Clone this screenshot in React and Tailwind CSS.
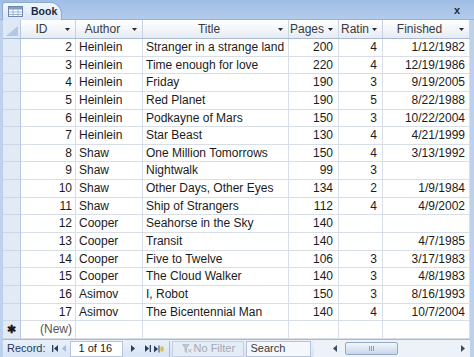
import React from "react";

const rows = [
  ["2", "Heinlein", "Stranger in a strange land", "200", "4", "1/12/1982"],
  ["3", "Heinlein", "Time enough for love", "220", "4", "12/19/1986"],
  ["4", "Heinlein", "Friday", "190", "3", "9/19/2005"],
  ["5", "Heinlein", "Red Planet", "190", "5", "8/22/1988"],
  ["6", "Heinlein", "Podkayne of Mars", "150", "3", "10/22/2004"],
  ["7", "Heinlein", "Star Beast", "130", "4", "4/21/1999"],
  ["8", "Shaw", "One Million Tomorrows", "150", "4", "3/13/1992"],
  ["9", "Shaw", "Nightwalk", "99", "3", ""],
  ["10", "Shaw", "Other Days, Other Eyes", "134", "2", "1/9/1984"],
  ["11", "Shaw", "Ship of Strangers", "112", "4", "4/9/2002"],
  ["12", "Cooper", "Seahorse in the Sky", "140", "", ""],
  ["13", "Cooper", "Transit", "140", "", "4/7/1985"],
  ["14", "Cooper", "Five to Twelve", "106", "3", "3/17/1983"],
  ["15", "Cooper", "The Cloud Walker", "140", "3", "4/8/1983"],
  ["16", "Asimov", "I, Robot", "150", "3", "8/16/1993"],
  ["17", "Asimov", "The Bicentennial Man", "140", "4", "10/7/2004"],
];

const cell = "shrink-0 border-r border-b border-[#d7dee8] leading-[16.65px] whitespace-nowrap overflow-hidden";

function Arrow() {
  return (
    <svg width="5" height="3" viewBox="0 0 5 3" className="shrink-0 ml-[3px]">
      <path d="M0 0H5L2.5 3Z" fill="#2a2a2a" />
    </svg>
  );
}

function HeaderCell({ w, label, left }) {
  return (
    <div className={`${w} shrink-0 h-full flex items-center border-r border-[#c9d4e2] pr-[5px]`}>
      {left ? (
        <div className="flex-1 whitespace-nowrap pl-[2px]">{label}</div>
      ) : (
        <div className="flex-1 text-center whitespace-nowrap">{label}</div>
      )}
      <Arrow />
    </div>
  );
}

function Sel({ children }) {
  return (
    <div className="w-[18px] shrink-0 bg-[#e2eaf6] border-r border-b border-r-[#b6c7dd] border-b-[#cbd7e8] flex items-center justify-center text-[#1a1a1a]">
      {children}
    </div>
  );
}

export default function App() {
  return (
    <div
      className="w-[474px] h-[357px] overflow-hidden flex flex-col bg-[#bdd3ee] text-[12px] text-[#1b1b1b]"
      style={{ fontFamily: '"Liberation Sans", Arial, sans-serif' }}
    >
      {/* Tab strip */}
      <div className="h-[20px] shrink-0 flex items-end bg-gradient-to-b from-[#9fbde5] to-[#b3cced] border-b border-[#94b0d6]">
        <div className="ml-[2px] h-[18px] w-[60px] flex items-center rounded-tl-[3px] rounded-tr-[12px] bg-gradient-to-b from-[#f3f7fc] to-[#d9e6f6] border border-b-0 border-[#8eabd2] -mb-px">
          <svg width="15" height="11" viewBox="0 0 15 11" className="ml-[5px]">
            <rect x="0.5" y="0.5" width="14" height="10" fill="#ffffff" stroke="#6a87ad" />
            <rect x="1" y="1" width="13" height="2.5" fill="#7e9fc9" />
            <path d="M5 1V10.5M10 1V10.5M1 6H14.5M1 8.5H14.5" stroke="#8aa3c4" strokeWidth="0.8" />
          </svg>
          <span className="ml-[8px] text-[10.5px] font-bold text-[#1b2b44]">Book</span>
        </div>
        <div className="flex-1" />
        <div className="mr-[14px] mb-[3px] text-[11px] font-bold text-[#2a2a2a] leading-none">x</div>
      </div>

      <div className="flex-1 flex min-h-0">
        <div className="w-[3px] shrink-0 bg-[#bcd1ec]" />
        <div className="flex-1 flex flex-col bg-white min-w-0">
          {/* Header */}
          <div className="h-[19px] shrink-0 flex bg-gradient-to-b from-[#ffffff] to-[#e6ecf4] border-b border-[#a9bbd2] text-[#3a3a3a]">
            <div className="w-[18px] shrink-0 h-full bg-[#dfe8f5] border-r border-[#b6c7dd] flex items-end justify-end pb-[2px] pr-[2px]">
              <svg width="12" height="10" viewBox="0 0 12 10">
                <path d="M12 0V10H0Z" fill="#b3c8e6" />
              </svg>
            </div>
            <HeaderCell w="w-[55px]" label="ID" />
            <HeaderCell w="w-[67px]" label="Author" />
            <HeaderCell w="w-[146px]" label="Title" />
            <HeaderCell w="w-[50px]" label="Pages" />
            <HeaderCell w="w-[44px]" label="Ratin" left />
            <HeaderCell w="w-[87px]" label="Finished" />
          </div>

          {rows.map((r) => (
            <div key={r[0]} className="h-[17.65px] shrink-0 flex">
              <Sel />
              <div className={`${cell} w-[55px] text-right pr-[3px]`}>{r[0]}</div>
              <div className={`${cell} w-[67px] pl-[3px]`}>{r[1]}</div>
              <div className={`${cell} w-[146px] pl-[3px]`}>{r[2]}</div>
              <div className={`${cell} w-[50px] text-right pr-[5px]`}>{r[3]}</div>
              <div className={`${cell} w-[44px] text-right pr-[5px]`}>{r[4]}</div>
              <div className={`${cell} w-[87px] text-right pr-[4px]`}>{r[5]}</div>
            </div>
          ))}

          <div className="h-[17.65px] shrink-0 flex">
            <Sel>
              <span className="text-[11px] leading-none font-bold">✱</span>
            </Sel>
            <div className={`${cell} w-[55px] text-right pr-[3px] text-[#555]`}>(New)</div>
            <div className={`${cell} w-[67px]`} />
            <div className={`${cell} w-[146px]`} />
            <div className={`${cell} w-[50px]`} />
            <div className={`${cell} w-[44px]`} />
            <div className={`${cell} w-[87px]`} />
          </div>

          <div className="flex-1" />

          {/* Record navigation bar */}
          <div className="h-[18px] shrink-0 flex items-center bg-gradient-to-b from-[#e9f0f9] to-[#d8e4f4] border-t border-[#a3b9d6] text-[11px]">
            <span className="ml-[4px] text-[#1f3b60]">Record:</span>
            <svg width="6" height="7" viewBox="0 0 6 7" className="ml-[6px]">
              <rect x="0" y="0" width="1.3" height="7" fill="#2b3f5c" />
              <path d="M6 0V7L2 3.5Z" fill="#2b3f5c" />
            </svg>
            <svg width="4" height="7" viewBox="0 0 4 7" className="ml-[4px]">
              <path d="M4 0V7L0 3.5Z" fill="#a9b9d0" />
            </svg>
            <div className="ml-[4px] h-[16px] w-[53px] bg-white border border-[#b3c5dd] flex items-center pl-[8px] text-[#1b1b1b]">
              1 of 16
            </div>
            <svg width="4" height="7" viewBox="0 0 4 7" className="ml-[8px]">
              <path d="M0 0V7L4 3.5Z" fill="#2b3f5c" />
            </svg>
            <svg width="6" height="7" viewBox="0 0 6 7" className="ml-[10px]">
              <path d="M0 0V7L4 3.5Z" fill="#2b3f5c" />
              <rect x="4.7" y="0" width="1.3" height="7" fill="#2b3f5c" />
            </svg>
            <svg width="10" height="8" viewBox="0 0 10 8" className="ml-[3px]">
              <path d="M0 0.5V7.5L4 4Z" fill="#2b3f5c" />
              <rect x="4.5" y="0.5" width="1" height="7" fill="#2b3f5c" />
              <path d="M8 1V7M5.5 4H10.5M6.3 1.8L9.7 6.2M9.7 1.8L6.3 6.2" stroke="#e0b43a" strokeWidth="1" />
            </svg>
            <div className="ml-[5px] h-[16px] w-px bg-[#a8bcd6]" />
            <div className="ml-[2px] h-[16px] w-[72px] border border-[#c3d1e3] bg-[#e4ecf6] flex items-center text-[#a3a9b2]">
              <svg width="10" height="9" viewBox="0 0 10 9" className="ml-[9px]">
                <path d="M0.5 0.5H7L4.5 4V8.5L3 7.5V4Z" fill="#c3c9d2" stroke="#a9b0ba" strokeWidth="0.6" />
                <path d="M6 5L9.5 8.5M9.5 5L6 8.5" stroke="#b0b6c0" strokeWidth="1" />
              </svg>
              <span className="ml-[2px]">No Filter</span>
            </div>
            <div className="ml-[2px] h-[16px] w-[65px] border border-[#b3c5dd] bg-[#f4f7fb] flex items-center pl-[4px] text-[#3a3a3a]">
              Search
            </div>
            <div className="flex-1 h-full flex items-center bg-[#edf2f8] ml-[3px]">
              <svg width="4" height="7" viewBox="0 0 4 7" className="ml-[19px]">
                <path d="M4 0V7L0 3.5Z" fill="#3c4c63" />
              </svg>
              <div className="ml-[8px] h-[13px] w-[53px] rounded-[2px] border border-[#94a9c7] bg-gradient-to-b from-[#f2f6fb] to-[#c9d7ea] flex items-center justify-center gap-[1px]">
                <div className="w-px h-[5px] bg-[#8c9fbb]" />
                <div className="w-px h-[5px] bg-[#8c9fbb]" />
                <div className="w-px h-[5px] bg-[#8c9fbb]" />
              </div>
              <div className="flex-1" />
              <svg width="4" height="7" viewBox="0 0 4 7" className="mr-[5px]">
                <path d="M0 0V7L4 3.5Z" fill="#3c4c63" />
              </svg>
            </div>
          </div>
        </div>
        <div className="w-[4px] shrink-0 bg-[#bcd1ec]" />
      </div>
    </div>
  );
}
